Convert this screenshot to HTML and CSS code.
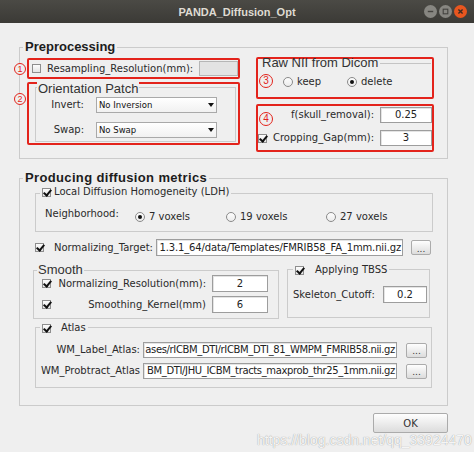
FILE: index.html
```html
<!DOCTYPE html>
<html lang="en">
<head>
  <meta charset="UTF-8" />
  <title>PANDA_Diffusion_Opt</title>
  <link rel="stylesheet" href="styles.css">
</head>
<body>
  <header class="titlebar">
    <span></span>
    <span class="title">PANDA_Diffusion_Opt</span>
    <div class="winbtns">
      <svg viewBox="0 0 13 13"><circle cx="6.5" cy="6.5" r="6.5" fill="#878681"/><path d="M3.8 6.5h5.4" stroke="#44433f" stroke-width="1.4"/></svg>
      <svg viewBox="0 0 13 13"><circle cx="6.5" cy="6.5" r="6.5" fill="#878681"/><rect x="4.2" y="4.2" width="4.6" height="4.6" fill="none" stroke="#44433f" stroke-width="1.1"/></svg>
      <svg viewBox="0 0 13 13"><circle cx="6.5" cy="6.5" r="6.5" fill="#e8561f"/><path d="M4.4 4.4l4.2 4.2M8.6 4.4l-4.2 4.2" stroke="#3d2b22" stroke-width="1.4"/></svg>
    </div>
  </header>

  <main class="dialog">
    <section class="group pre">
      <span class="caption bold">Preprocessing</span>

      <div class="pre-left">
        <div class="mark box1">
          <span class="num n1">1</span>
          <span class="cb"></span>
          <span class="lbl">Resampling_Resolution(mm):</span>
          <span class="field disabled"></span>
        </div>
        <div class="mark box2">
          <span class="num n2">2</span>
          <div class="titled orient">
            <span class="caption big">Orientation Patch</span>
            <div class="orient-grid">
              <span class="lbl r">Invert:</span>
              <div class="combo">No Inversion<i class="arrow"></i></div>
              <span class="lbl r">Swap:</span>
              <div class="combo">No Swap<i class="arrow"></i></div>
            </div>
          </div>
        </div>
      </div>

      <div class="pre-right">
        <div class="mark box3">
          <span class="num n3">3</span>
          <div class="rule-head"><span class="big">Raw NII from Dicom</span><span class="rule"></span></div>
          <div class="radios">
            <label class="opt"><span class="rb"></span>keep</label>
            <label class="opt"><span class="rb on"></span>delete</label>
          </div>
        </div>
        <div class="mark box4">
          <span class="num n4">4</span>
          <div class="skull-grid">
            <span></span><span class="lbl r">f(skull_removal):</span><span class="field c">0.25</span>
            <span class="cb on"></span><span class="lbl r">Cropping_Gap(mm):</span><span class="field c">3</span>
          </div>
        </div>
      </div>
    </section>

    <section class="group prod">
      <span class="caption bold wide">Producing diffusion metrics</span>

      <div class="titled ldh">
        <span class="caption cbcap"><span class="cb on"></span>Local Diffusion Homogeneity (LDH)</span>
        <div class="ldh-row">
          <span class="lbl">Neighborhood:</span>
          <label class="opt"><span class="rb on"></span>7 voxels</label>
          <label class="opt"><span class="rb"></span>19 voxels</label>
          <label class="opt"><span class="rb"></span>27 voxels</label>
        </div>
      </div>

      <div class="norm-row">
        <span class="cb on"></span>
        <span class="lbl">Normalizing_Target:</span>
        <div class="field path"><span>1.3.1_64/data/Templates/FMRIB58_FA_1mm.nii.gz</span></div>
        <button class="dots">...</button>
      </div>

      <div class="mid-row">
        <div class="titled smooth">
          <span class="caption big">Smooth</span>
          <div class="smooth-grid">
            <span class="cb on"></span>
            <span class="lbl clip"><span>Normalizing_Resolution(mm):</span></span>
            <span class="field c">2</span>
            <span class="cb on"></span>
            <span class="lbl clip"><span>Smoothing_Kernel(mm)</span></span>
            <span class="field c">6</span>
          </div>
        </div>
        <div class="titled tbss">
          <span class="caption cbcap"><span class="cb on"></span>Applying TBSS</span>
          <div class="tbss-row">
            <span class="lbl">Skeleton_Cutoff:</span>
            <span class="field c">0.2</span>
          </div>
        </div>
      </div>

      <div class="titled atlas">
        <span class="caption cbcap"><span class="cb on"></span>Atlas</span>
        <div class="atlas-row">
          <span class="lbl r">WM_Label_Atlas:</span>
          <div class="field path"><span>ases/rICBM_DTI/rICBM_DTI_81_WMPM_FMRIB58.nii.gz</span></div>
          <button class="dots">...</button>
        </div>
        <div class="atlas-row">
          <span class="lbl r">WM_Probtract_Atlas</span>
          <div class="field path"><span>BM_DTI/JHU_ICBM_tracts_maxprob_thr25_1mm.nii.gz</span></div>
          <button class="dots">...</button>
        </div>
      </div>
    </section>

    <button class="ok">OK</button>
  </main>

  <div class="watermark">https://blog.csdn.net/qq_33924470</div>
</body>
</html>
```

FILE: styles.css
```css
* {
  margin: 0;
  padding: 0;
  box-sizing: border-box;
}

body {
  width: 474px;
  height: 452px;
  overflow: hidden;
  position: relative;
  background: #efefef;
  font-family: "DejaVu Sans", sans-serif;
  font-size: 10px;
  line-height: 12px;
  color: #2a2a2a;
}

/* window title bar */
.titlebar {
  height: 23px;
  display: grid;
  grid-template-columns: 1fr auto 1fr;
  align-items: center;
  background: linear-gradient(#4b4a45, #3b3a36);
}

.title {
  font: bold 11px "Liberation Sans", sans-serif;
  color: #dfdbd2;
}

.winbtns {
  justify-self: end;
  display: flex;
  gap: 2px;
  padding-right: 7px;
}

.winbtns svg {
  width: 13px;
  height: 13px;
  display: block;
}

/* dialog body */
.dialog {
  display: flex;
  flex-direction: column;
  padding: 24px 26px 0 19px;
}

.group,
.titled {
  border: 1px solid #cbcbcb;
  position: relative;
}

.caption {
  position: absolute;
  background: #efefef;
  white-space: nowrap;
}

.caption.bold {
  top: -9px;
  left: 3px;
  padding: 0 2px;
  font: bold 13px/16px "Liberation Sans", sans-serif;
  color: #1c1c1c;
}

.caption.wide {
  letter-spacing: 0.35px;
}

.caption.big,
.big {
  font: 13px/14px "Liberation Sans", sans-serif;
  color: #333;
}

.caption.big {
  padding: 0 1px;
}

.caption.cbcap {
  display: flex;
  align-items: center;
  padding: 0 2px;
  line-height: 12px;
}

.lbl {
  white-space: nowrap;
}

.lbl.r {
  text-align: right;
}

/* controls */
.cb {
  flex: none;
  width: 9px;
  height: 9px;
  border: 1px solid #8e8e8e;
  background: linear-gradient(#fdfdfd, #e4e4e4);
  position: relative;
}

.cb.on::after {
  content: "";
  position: absolute;
  left: 2px;
  top: -1px;
  width: 3px;
  height: 6px;
  border: solid #111;
  border-width: 0 2px 2px 0;
  transform: rotate(40deg);
}

.rb {
  flex: none;
  width: 10px;
  height: 10px;
  border: 1px solid #8a8a8a;
  border-radius: 50%;
  background: linear-gradient(#fdfdfd, #ececec);
  position: relative;
}

.rb.on::after {
  content: "";
  position: absolute;
  left: 2px;
  top: 2px;
  width: 4px;
  height: 4px;
  border-radius: 50%;
  background: #111;
}

.opt {
  display: flex;
  align-items: center;
  gap: 4px;
  white-space: nowrap;
}

.field {
  height: 17px;
  border: 1px solid #9d9d9d;
  background: #fff;
  box-shadow: inset 1px 1px 0 #e4e4e4;
  display: flex;
  align-items: center;
  color: #222;
}

.field.c {
  justify-content: center;
}

.field.path {
  justify-content: flex-end;
  overflow: hidden;
  white-space: nowrap;
  padding-right: 1px;
  letter-spacing: -0.14px;
}

.field.disabled {
  width: 39px;
  height: 15px;
  margin-left: auto;
  background: #e3e3e3;
  border-color: #b6b6b6;
  box-shadow: none;
}

.combo {
  height: 16px;
  border: 1px solid #a9a9a9;
  background: linear-gradient(#ffffff, #f1f1f1);
  display: flex;
  align-items: center;
  justify-content: space-between;
  padding: 0 2px 0 2px;
  font-size: 8.5px;
  color: #111;
}

.arrow {
  border-left: 3.5px solid transparent;
  border-right: 3.5px solid transparent;
  border-top: 4px solid #111;
}

.dots,
.ok {
  border: 1px solid #ababab;
  border-radius: 2px;
  background: linear-gradient(#fefefe, #dcdcdc);
  font-family: "DejaVu Sans", sans-serif;
  color: #333;
}

.dots {
  flex: none;
  width: 20px;
  height: 15px;
  margin-left: 8px;
  font-size: 9px;
  line-height: 9px;
  padding-top: 3px;
}

/* red annotations */
.mark {
  border: 2px solid #e3231b;
  border-radius: 2px;
  position: relative;
}

.num {
  position: absolute;
  display: flex;
  align-items: center;
  justify-content: center;
  border: 1px solid #e3231b;
  border-radius: 50%;
  background: #efefef;
  color: #e3231b;
  font: 9px/1 "Liberation Sans", sans-serif;
}

.n1,
.n2 {
  width: 12px;
  height: 12px;
  left: -15px;
}

.n1 { top: 3px; }
.n2 { top: 9px; }

.n3,
.n4 {
  width: 14px;
  height: 14px;
  left: 1px;
  font-size: 10px;
}

.n3 { top: 15px; }
.n4 { top: 6px; }

/* preprocessing */
.pre {
  height: 112px;
  display: flex;
  align-items: flex-start;
  gap: 16px;
  padding: 10px 0 0 7px;
}

.pre-left {
  width: 213px;
  display: flex;
  flex-direction: column;
  gap: 3px;
}

.pre-right {
  width: 178px;
  margin-top: -1px;
  display: flex;
  flex-direction: column;
  gap: 5px;
}

.box1 {
  height: 21px;
  display: flex;
  align-items: center;
  padding-left: 3px;
  gap: 6px;
}

.box2 {
  height: 63px;
  padding: 3px 0 0 6px;
}

.orient {
  width: 201px;
  height: 55px;
}

.orient > .caption {
  top: -6px;
  left: 1px;
}

.orient-grid {
  display: grid;
  grid-template-columns: 40px 121px;
  column-gap: 12px;
  row-gap: 9px;
  align-items: center;
  padding: 9px 0 0 8px;
}

.box3 {
  height: 42px;
}

.rule-head {
  display: flex;
  align-items: flex-start;
  height: 12px;
  margin-top: -2px;
  padding-left: 4px;
}

.rule-head .big {
  line-height: 12px;
}

.rule {
  flex: 1;
  border-top: 1px solid #c4c4c4;
  margin: 6px 1px 0 2px;
}

.radios {
  display: flex;
  align-items: center;
  height: 12px;
  margin-top: 7px;
  padding-left: 25px;
}

.radios .opt:first-child {
  width: 64px;
}

.box4 {
  height: 48px;
}

.skull-grid {
  display: grid;
  grid-template-columns: 9px 1fr 52px;
  column-gap: 6px;
  row-gap: 7px;
  align-items: center;
  padding-top: 1px;
}

.skull-grid .field {
  height: 16px;
}

/* producing diffusion metrics */
.prod {
  height: 228px;
  margin-top: 19px;
  padding: 14px 0 0 15px;
}

.ldh {
  width: 398px;
  height: 39px;
}

.ldh > .caption {
  top: -8px;
  left: 4px;
  gap: 3px;
}

.ldh-row {
  display: flex;
  align-items: flex-start;
  padding: 14px 0 0 9px;
}

.ldh-row .lbl {
  width: 90px;
}

.ldh-row .opt {
  margin-top: 3px;
}

.ldh-row .opt:nth-of-type(1) { width: 91px; }
.ldh-row .opt:nth-of-type(2) { width: 100px; }

.norm-row {
  display: flex;
  align-items: center;
  height: 17px;
  margin-top: 7px;
}

.norm-row .cb {
  margin-right: 10px;
}

.norm-row .lbl {
  width: 102px;
}

.norm-row .field {
  width: 247px;
}

.mid-row {
  display: flex;
  align-items: flex-start;
  margin: 14px 0 0 -2px;
}

.smooth {
  width: 246px;
  height: 49px;
}

.smooth > .caption {
  top: -8px;
  left: 3px;
}

.smooth-grid {
  display: grid;
  grid-template-columns: 9px 149px 56px;
  column-gap: 6px;
  row-gap: 4px;
  align-items: center;
  padding: 4px 0 0 8px;
}

.lbl.clip {
  display: flex;
  justify-content: flex-end;
  overflow: hidden;
}

.tbss {
  width: 143px;
  height: 49px;
  margin: -1px 0 0 8px;
}

.tbss > .caption {
  top: -6px;
  left: 5px;
  gap: 11px;
}

.tbss-row {
  display: flex;
  align-items: center;
  padding: 16px 0 0 5px;
}

.tbss-row .lbl {
  width: 81px;
  margin-right: 9px;
}

.tbss-row .field {
  width: 44px;
}

.atlas {
  width: 397px;
  height: 61px;
  margin-top: 8px;
  padding-top: 14px;
  display: flex;
  flex-direction: column;
  gap: 5px;
}

.atlas > .caption {
  top: -6px;
  left: 4px;
  gap: 10px;
}

.atlas-row {
  display: flex;
  align-items: center;
  height: 16px;
}

.atlas-row .lbl {
  width: 104px;
  margin-right: 3px;
}

.atlas-row .field {
  width: 254px;
  height: 16px;
  letter-spacing: -0.36px;
}

.atlas-row .dots {
  width: 21px;
  margin-left: 9px;
}

.ok {
  align-self: flex-end;
  width: 75px;
  height: 20px;
  margin-top: 7px;
  font-size: 10px;
}

.watermark {
  position: absolute;
  left: 257px;
  top: 432px;
  font: 14px "Liberation Sans", sans-serif;
  color: rgba(255, 255, 255, 0.92);
  text-shadow: 0 0 1px rgba(0, 0, 0, 0.45);
  white-space: nowrap;
}
```
